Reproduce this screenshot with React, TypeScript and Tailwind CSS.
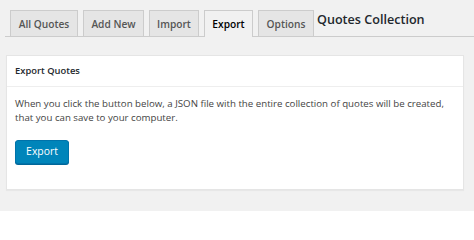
import React from "react";

const tabs = [
  { label: "All Quotes", w: "w-[68px]" },
  { label: "Add New", w: "w-[61px]" },
  { label: "Import", w: "w-[50px]" },
  { label: "Export", w: "w-[49px]", active: true },
  { label: "Options", w: "w-[56px]" },
];

export default function App() {
  return (
    <div
      className="w-[474px] h-[211px] bg-[#f1f1f1] overflow-hidden"
      style={{ fontFamily: '"Open Sans", sans-serif' }}
    >
      <div className="pl-[5px] pt-[10px]">
        <div className="flex items-end border-b border-[#cccccc] h-[27px]">
          {tabs.map((t) => (
            <div
              key={t.label}
              className={
                t.active
                  ? "ml-[5px] h-[27px] -mb-px w-[49px] flex items-center justify-center border border-b-0 border-[#cccccc] bg-[#f1f1f1] text-[10.2px] font-semibold text-black"
                  : `ml-[5px] h-[26px] ${t.w} flex items-center justify-center border border-b-0 border-[#cccccc] bg-[#e5e5e5] text-[10.2px] font-semibold text-[#555555]`
              }
            >
              <span className="mt-[2px]">{t.label}</span>
            </div>
          ))}
          <div className="self-start ml-[3px] mt-[1px] text-[12.6px] font-semibold text-[#23282d] leading-[18px]">
            Quotes Collection
          </div>
        </div>
      </div>
      <div className="ml-[6px] mt-[18px] w-[458px] h-[135px] bg-white border border-[#e5e5e5] shadow-[0_1px_1px_rgba(0,0,0,0.04)]">
        <div className="h-[31px] border-b border-[#eeeeee] flex items-center pl-[8px]">
          <span className="text-[9.4px] font-semibold text-[#23282d] mt-[1px]">Export Quotes</span>
        </div>
        <div className="pl-[8px] pt-[10px]">
          <p className="text-[9.7px] leading-[14px] text-[#444444]">
            When you click the button below, a JSON file with the entire collection of quotes will be created, that you can save to your computer.
          </p>
          <button className="mt-[15px] w-[54px] h-[24px] rounded-[3px] bg-[#0085ba] border border-[#0073aa] text-white text-[10.4px] shadow-[0_1px_0_#006799]">
            Export
          </button>
        </div>
      </div>
    </div>
  );
}
